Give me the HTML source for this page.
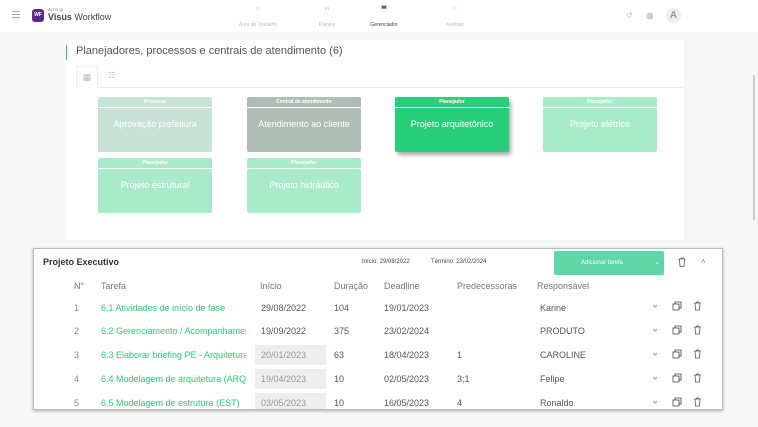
<!DOCTYPE html><html><head><style>
*{margin:0;padding:0;box-sizing:border-box}
body{width:758px;height:427px;overflow:hidden;background:#f7f7f7;font-family:"Liberation Sans",sans-serif;position:relative}
.a{position:absolute}
.hdr{left:0;top:0;width:758px;height:32px;background:#fff}
.nav{font-size:5px;color:#bbb;text-align:center;width:60px;line-height:8px}
.card{width:114px}
.ch{height:10px;font-size:5px;font-weight:bold;color:#fff;text-align:center;line-height:10px;border-radius:2px 2px 0 0}
.cb{height:44px;margin-top:1px;color:#fff;font-size:9px;text-align:center;padding-top:11px;border-radius:0 0 2px 2px}
.t{font-size:9px;color:#555;white-space:nowrap}
.g{color:#2ecc71}
.gray{background:#eee;color:#999;height:20px;line-height:20px;padding-left:6px;width:71px}
</style></head><body>
<div class="a hdr"></div>
<div class="a" style="left:12px;top:11px;width:8px;height:1px;background:#aaa;box-shadow:0 3px #aaa,0 6px #aaa"></div>
<div class="a" style="left:32px;top:9px;width:12px;height:13px;background:#5b2a86;border-radius:3px;color:#fff;font-size:5px;font-weight:bold;text-align:center;line-height:13px">WF</div>
<div class="a" style="left:48px;top:7px;font-size:4px;color:#666">ALTO QI</div>
<div class="a" style="left:48px;top:12px;font-size:9px;color:#444"><b>Visus</b> Workflow</div>
<div class="a nav" style="left:228px;top:5px">▭<br><br>Área de Trabalho</div>
<div class="a nav" style="left:297px;top:5px">ılı<br><br>Painéis</div>
<div class="a nav" style="left:354px;top:5px;color:#444">ᚙ<br><br>Gerenciador</div>
<div class="a nav" style="left:425px;top:5px">⚐<br><br>Kanban</div>
<div class="a" style="left:626px;top:11px;font-size:8px;color:#bbb">↺</div>
<div class="a" style="left:646px;top:11px;font-size:8px;color:#bbb">▦</div>
<div class="a" style="left:666px;top:8px;width:15px;height:15px;border-radius:50%;background:#eee;color:#999;font-size:10px;text-align:center;line-height:15px;font-weight:bold">A</div>
<div class="a" style="left:753px;top:75px;width:2px;height:145px;background:#ccc"></div>

<div class="a" style="left:66px;top:40px;width:618px;height:200px;background:#fff"></div>
<div class="a" style="left:66px;top:45px;width:1px;height:15px;background:#2ecc71"></div>
<div class="a" style="left:76px;top:45px;font-size:11px;color:#555">Planejadores, processos e centrais de atendimento (6)</div>
<div class="a" style="left:76px;top:66px;width:22px;height:22px;border:1px solid #eee;border-bottom:none;color:#bbb;font-size:9px;text-align:center;line-height:20px">▦</div>
<div class="a" style="left:108px;top:71px;font-size:8px;color:#8de0b0">☷</div>
<div class="a" style="left:98px;top:87px;width:585px;height:1px;background:#eee"></div>

<div class="a card" style="left:98px;top:97px"><div class="ch" style="background:#c8e2d6">Processo</div><div class="cb" style="background:#c8e2d6">Aprovação prefeitura</div></div>
<div class="a card" style="left:247px;top:97px"><div class="ch" style="background:#b1bcb6">Central de atendimento</div><div class="cb" style="background:#b1bcb6">Atendimento ao cliente</div></div>
<div class="a card" style="left:395px;top:97px;box-shadow:2px 3px 4px rgba(0,0,0,.35);border-radius:3px"><div class="ch" style="background:#27cf7b">Planejador</div><div class="cb" style="background:#27cf7b">Projeto arquitetônico</div></div>
<div class="a card" style="left:543px;top:97px"><div class="ch" style="background:#a8ebcb">Planejador</div><div class="cb" style="background:#a8ebcb">Projeto elétrico</div></div>
<div class="a card" style="left:98px;top:158px"><div class="ch" style="background:#a8ebcb">Planejador</div><div class="cb" style="background:#a8ebcb">Projeto estrutural</div></div>
<div class="a card" style="left:247px;top:158px"><div class="ch" style="background:#a8ebcb">Planejador</div><div class="cb" style="background:#a8ebcb">Projeto hidráulico</div></div>

<div class="a" style="left:33px;top:248px;width:690px;height:162px;background:#fff;border:1px solid #bbb;box-shadow:0 1px 3px rgba(0,0,0,.3)"></div>
<div class="a" style="left:43px;top:257px;font-size:9px;font-weight:bold;color:#333">Projeto Executivo</div>
<div class="a" style="left:362px;top:259px;font-size:6px;color:#444">Início: 29/08/2022</div>
<div class="a" style="left:431px;top:259px;font-size:6px;color:#444">Término: 23/02/2024</div>
<div class="a" style="left:554px;top:251px;width:110px;height:24px;background:#5fd6a8;border-radius:2px;color:#fff;font-size:6px;line-height:24px;padding-left:27px">Adicionar tarefa<span style="position:absolute;right:4px">⌄</span></div>
<svg class="a" style="left:678px;top:257px" width="8" height="10" viewBox="0 0 8 10" fill="none" stroke="#555" stroke-width=".8"><path d="M0.5 2h7M3 2V1h2v1M1.5 2l.5 7.5h4L6.5 2"/></svg>
<div class="a" style="left:701px;top:257px;font-size:8px;color:#888">˄</div>

<div class="a t" style="left:74px;top:281px;color:#777">N°</div>
<div class="a t" style="left:101px;top:281px;color:#777">Tarefa</div>
<div class="a t" style="left:260px;top:281px;color:#777">Início</div>
<div class="a t" style="left:334px;top:281px;color:#777">Duração</div>
<div class="a t" style="left:384px;top:281px;color:#777">Deadline</div>
<div class="a t" style="left:457px;top:281px;color:#777">Predecessoras</div>
<div class="a t" style="left:537px;top:281px;color:#777">Responsável</div>

<div class="a t" style="left:74px;top:303px;color:#888">1</div><div class="a t g" style="left:101px;top:303px">6.1 Atividades de início de fase</div><div class="a t" style="left:261px;top:303px">29/08/2022</div><div class="a t" style="left:334px;top:303px">104</div><div class="a t" style="left:384px;top:303px">19/01/2023</div><div class="a t" style="left:540px;top:303px">Karine</div>
<div class="a t" style="left:74px;top:326px;color:#888">2</div><div class="a t g" style="left:101px;top:326px;width:145px;overflow:hidden">6.2 Gerenciamento / Acompanhamento</div><div class="a t" style="left:261px;top:326px">19/09/2022</div><div class="a t" style="left:334px;top:326px">375</div><div class="a t" style="left:384px;top:326px">23/02/2024</div><div class="a t" style="left:540px;top:326px">PRODUTO</div>
<div class="a t" style="left:74px;top:350px;color:#888">3</div><div class="a t g" style="left:101px;top:350px;width:145px;overflow:hidden">6.3 Elaborar briefing PE - Arquitetura</div><div class="a t gray" style="left:255px;top:345px">20/01/2023</div><div class="a t" style="left:334px;top:350px">63</div><div class="a t" style="left:384px;top:350px">18/04/2023</div><div class="a t" style="left:457px;top:350px">1</div><div class="a t" style="left:540px;top:350px">CAROLINE</div>
<div class="a t" style="left:74px;top:374px;color:#888">4</div><div class="a t g" style="left:101px;top:374px;width:145px;overflow:hidden">6.4 Modelagem de arquitetura (ARQ)</div><div class="a t gray" style="left:255px;top:369px">19/04/2023</div><div class="a t" style="left:334px;top:374px">10</div><div class="a t" style="left:384px;top:374px">02/05/2023</div><div class="a t" style="left:457px;top:374px">3;1</div><div class="a t" style="left:540px;top:374px">Felipe</div>
<div class="a t" style="left:74px;top:398px;color:#888">5</div><div class="a t g" style="left:101px;top:398px;width:145px;overflow:hidden">6.5 Modelagem de estrutura (EST)</div><div class="a t gray" style="left:255px;top:393px;height:16px">03/05/2023</div><div class="a t" style="left:334px;top:398px">10</div><div class="a t" style="left:384px;top:398px">16/05/2023</div><div class="a t" style="left:457px;top:398px">4</div><div class="a t" style="left:540px;top:398px">Ronaldo</div>

<svg class="a" style="left:650px;top:300px" width="60" height="110" fill="none" stroke-width=".8">
<defs><g id="r"><path d="M3 5l2 2 2-2" stroke="#888"/><rect x="23" y="4" width="6" height="6" stroke="#444"/><path d="M25 4V2h6v6h-2" stroke="#444"/><path d="M44 3h7M46.5 3V2h2v1M45 3l.5 7h4l.5-7" stroke="#555"/></g></defs>
<use href="#r" y="0"/><use href="#r" y="24"/><use href="#r" y="48"/><use href="#r" y="72"/><use href="#r" y="96"/>
</svg>
</body></html>
